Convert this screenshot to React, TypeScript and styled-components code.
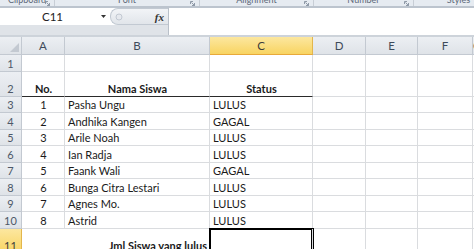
import React from 'react';
import styled, { createGlobalStyle } from 'styled-components';

const GlobalStyle = createGlobalStyle`
  html, body {
    margin: 0;
    padding: 0;
    background: #ffffff;
  }
  body {
    font-family: Lato, "Liberation Sans", sans-serif;
    overflow: hidden;
  }
`;

const COLS = ['A', 'B', 'C', 'D', 'E', 'F', 'G'];

const students = [
  { no: 1, name: 'Pasha Ungu', status: 'LULUS' },
  { no: 2, name: 'Andhika Kangen', status: 'GAGAL' },
  { no: 3, name: 'Arile Noah', status: 'LULUS' },
  { no: 4, name: 'Ian Radja', status: 'LULUS' },
  { no: 5, name: 'Faank Wali', status: 'GAGAL' },
  { no: 6, name: 'Bunga Citra Lestari', status: 'LULUS' },
  { no: 7, name: 'Agnes Mo.', status: 'LULUS' },
  { no: 8, name: 'Astrid', status: 'LULUS' },
];

const ribbonGroups = [
  { label: 'Clipboard', width: 55, launcher: true },
  { label: 'Font', width: 145, launcher: true },
  { label: 'Alignment', width: 114, launcher: true },
  { label: 'Number', width: 100, launcher: true },
  { label: 'Styles', width: 90, launcher: false },
];

const Launcher = () => (
  <svg width="5" height="5" viewBox="0 0 5 5">
    <path d="M0.5 0.5 H3 M0.5 0.5 V3 M1.5 1.5 L4.5 4.5 M4.5 2 V4.5 H2" stroke="#7a8595" strokeWidth="0.8" fill="none" />
  </svg>
);

const App: React.FC = () => {
  return (
    <>
      <GlobalStyle />
      <Window>
        <RibbonStrip>
          {ribbonGroups.map((g) => (
            <RibbonGroup key={g.label} $w={g.width}>
              <RibbonLabel>{g.label}</RibbonLabel>
              {g.launcher && (
                <LauncherBox>
                  <Launcher />
                </LauncherBox>
              )}
            </RibbonGroup>
          ))}
        </RibbonStrip>

        <FormulaBar>
          <FormulaLeft>
            <NameRow>
              <NameBox>
                <NameText>C11</NameText>
                <svg width="5" height="3" viewBox="0 0 5 3">
                  <path d="M0 0 H5 L2.5 3 Z" fill="#333" />
                </svg>
              </NameBox>
              <Pill>
                <svg width="8" height="8" viewBox="0 0 8 8">
                  <circle cx="4" cy="4" r="3" fill="#e6e9ee" stroke="#b9c0ca" strokeWidth="0.8" />
                </svg>
                <Fx>fx</Fx>
              </Pill>
            </NameRow>
            <GreyStrip />
          </FormulaLeft>
          <FormulaInput />
        </FormulaBar>

        <Sheet>
          <Corner>
            <svg width="9" height="9" viewBox="0 0 9 9">
              <path d="M9 0 V9 H0 Z" fill="#c3c9d1" />
            </svg>
          </Corner>
          {COLS.map((c) => (
            <ColHeader key={c} $selected={c === 'C'}>
              {c}
            </ColHeader>
          ))}

          <RowHeader>1</RowHeader>
          {COLS.map((c) => (
            <Cell key={`1${c}`} />
          ))}

          <RowHeader>2</RowHeader>
          <Cell $align="center" $bold $underline>No.</Cell>
          <Cell $align="center" $bold $underline>Nama Siswa</Cell>
          <Cell $align="center" $bold $underline>Status</Cell>
          {COLS.slice(3).map((c) => (
            <Cell key={`2${c}`} />
          ))}

          {students.map((s, i) => (
            <React.Fragment key={s.no}>
              <RowHeader>{i + 3}</RowHeader>
              <Cell $align="center">{s.no}</Cell>
              <Cell>{s.name}</Cell>
              <Cell>{s.status}</Cell>
              {COLS.slice(3).map((c) => (
                <Cell key={`${i}${c}`} />
              ))}
            </React.Fragment>
          ))}

          <RowHeader $selected>11</RowHeader>
          <Cell $align="right" $bold $span={2}>Jml Siswa yang lulus</Cell>
          <Cell $active />
          {COLS.slice(3).map((c) => (
            <Cell key={`11${c}`} />
          ))}
        </Sheet>
      </Window>
    </>
  );
};

export default App;

const Window = styled.div`
  width: 474px;
  height: 249px;
  overflow: hidden;
  display: flex;
  flex-direction: column;
  background: #ffffff;
`;

const RibbonStrip = styled.div`
  height: 6px;
  flex: none;
  display: flex;
  background: #e6ebf1;
  border-bottom: 2px solid #bcc4ce;
  overflow: hidden;
`;

const RibbonGroup = styled.div<{ $w: number }>`
  width: ${({ $w }) => $w}px;
  flex: none;
  display: flex;
  align-items: flex-start;
  justify-content: center;
  position: relative;
  border-right: 1px solid #c8ced6;
  box-sizing: border-box;
`;

const RibbonLabel = styled.span`
  font-size: 9px;
  line-height: 9px;
  margin-top: -5px;
  color: #5d6878;
  white-space: nowrap;
`;

const LauncherBox = styled.span`
  position: absolute;
  right: 4px;
  top: 0;
  line-height: 0;
`;

const FormulaBar = styled.div`
  height: 27px;
  flex: none;
  display: flex;
  border-bottom: 2px solid #cdd3da;
`;

const FormulaLeft = styled.div`
  width: 168px;
  flex: none;
  display: flex;
  flex-direction: column;
`;

const NameRow = styled.div`
  height: 17px;
  display: flex;
  background: #ffffff;
`;

const NameBox = styled.div`
  width: 110px;
  display: flex;
  align-items: center;
  padding-right: 4px;
  box-sizing: border-box;
`;

const NameText = styled.span`
  flex: 1;
  text-align: center;
  padding-left: 4px;
  font-size: 11.5px;
  color: #222;
`;

const Pill = styled.div`
  flex: 1;
  display: flex;
  align-items: center;
  justify-content: space-between;
  padding: 0 4px 0 4px;
  background: linear-gradient(#f2f4f7, #e1e5ea);
  border: 1px solid #c2c9d2;
  border-right: none;
  border-radius: 8px 0 0 8px;
`;

const Fx = styled.span`
  font-family: "Liberation Serif", serif;
  font-style: italic;
  font-weight: bold;
  font-size: 11px;
  color: #333;
`;

const GreyStrip = styled.div`
  flex: 1;
  background: #dfe3e8;
`;

const FormulaInput = styled.div`
  flex: 1;
  background: #ffffff;
  border-left: 1px solid #b9c0c9;
`;

const Sheet = styled.div`
  flex: 1;
  display: grid;
  grid-template-columns: 22px 43px 145px 103px 53px 52px 55px 1fr;
  grid-template-rows: 18px 16.5px 25px repeat(8, 16.5px) 25px;
  background: #ffffff;
  font-size: 11px;
  color: #1a1a1a;
`;

const HeaderBase = styled.div<{ $selected?: boolean }>`
  box-sizing: border-box;
  display: flex;
  align-items: center;
  justify-content: center;
  color: ${({ $selected }) => ($selected ? '#3b3b3b' : '#3e4a5a')};
  border-right: 1px solid ${({ $selected }) => ($selected ? '#e3b64c' : '#c3c9d1')};
  border-bottom: 1px solid ${({ $selected }) => ($selected ? '#e8a93a' : '#c3c9d1')};
  background: ${({ $selected }) =>
    $selected ? 'linear-gradient(#fce79f, #f8d462)' : 'linear-gradient(#eceff3, #dfe3e8)'};
`;

const Corner = styled(HeaderBase)`
  align-items: flex-end;
  justify-content: flex-end;
  padding: 0 2px 2px 0;
`;

const ColHeader = styled(HeaderBase)`
  font-size: 11.5px;
`;

const RowHeader = styled(HeaderBase)`
  font-size: 11px;
  color: ${({ $selected }) => ($selected ? '#3b3b3b' : '#4d5868')};
  align-items: flex-end;
  padding-bottom: 1px;
`;

const Cell = styled.div<{
  $align?: 'left' | 'center' | 'right';
  $bold?: boolean;
  $underline?: boolean;
  $active?: boolean;
  $span?: number;
}>`
  box-sizing: border-box;
  display: flex;
  align-items: flex-end;
  justify-content: ${({ $align }) =>
    $align === 'center' ? 'center' : $align === 'right' ? 'flex-end' : 'flex-start'};
  padding: 0 2px 1px 3px;
  white-space: nowrap;
  font-weight: ${({ $bold }) => ($bold ? 700 : 400)};
  grid-column: ${({ $span }) => ($span ? `span ${$span}` : 'auto')};
  border-right: 1px solid #dadcdf;
  border-bottom: 1px solid ${({ $underline }) => ($underline ? '#2a2a2a' : '#dadcdf')};
  box-shadow: ${({ $active }) => ($active ? '0 0 0 1px #000, inset 0 0 0 1px #000' : 'none')};
`;
